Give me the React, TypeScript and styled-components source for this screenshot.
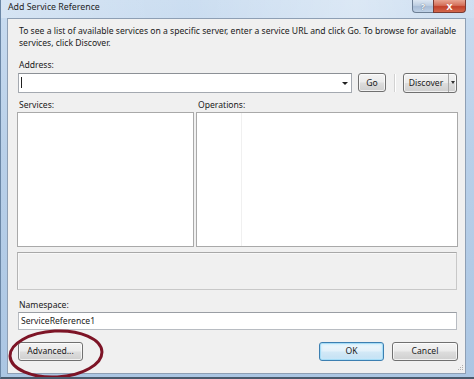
import styled, { createGlobalStyle, css } from 'styled-components';

const GlobalStyle = createGlobalStyle`
    html, body {
        margin: 0;
        padding: 0;
        background: #ffffff;
    }
    * {
        box-sizing: border-box;
    }
`;

const Window = styled.div`
    position: relative;
    width: 474px;
    height: 379px;
    display: flex;
    flex-direction: column;
    overflow: hidden;
    background: linear-gradient(180deg, #c9dcf0 0%, #b9d0e9 40%, #abc6e3 100%);
    border-left: 1px solid #6b87a6;
    border-bottom: 2px solid #4a5a6c;
    font-family: "Noto Sans", "Open Sans", sans-serif;
    color: #1a1a1a;
`;

const TitleBar = styled.div`
    height: 18px;
    display: flex;
    align-items: flex-start;
    justify-content: space-between;
    padding-left: 7px;
    background: linear-gradient(90deg, rgba(255,255,255,0.25) 0%, rgba(255,255,255,0.05) 40%, rgba(255,255,255,0.35) 75%, rgba(255,255,255,0.1) 100%);
`;

const Title = styled.span`
    font-size: 8.8px;
    line-height: 14px;
    color: #1e1e1e;
`;

const Captions = styled.div`
    display: flex;
    margin-right: 8px;
`;

const CaptionButton = styled.div<{ $close?: boolean }>`
    height: 13px;
    width: ${p => (p.$close ? '33px' : '21px')};
    display: flex;
    align-items: center;
    justify-content: center;
    font-size: 9px;
    font-weight: bold;
    color: #ffffff;
    border: 1px solid #6d7f95;
    border-top: none;
    ${p => p.$close
        ? css`
            border-radius: 0 0 4px 0;
            background: linear-gradient(180deg, #e8a593 0%, #d4705a 45%, #c2402a 55%, #d3684c 100%);
            border-color: #7a3b33;
        `
        : css`
            border-right: none;
            border-radius: 0 0 0 4px;
            background: linear-gradient(180deg, #dde7f2 0%, #bfcfe2 45%, #a9bdd6 55%, #bfd1e6 100%);
            color: #f4f8fc;
            text-shadow: 0 0 1px #3c4c60;
        `}
`;

const Client = styled.div`
    flex: 1;
    margin: 0 8px 3px 6px;
    border: 1px solid #8e9fb4;
    background: #f0f0f0;
    padding: 7px 7px 0 9px;
    display: flex;
    flex-direction: column;
`;

const Description = styled.p`
    margin: 0 0 0 2px;
    font-size: 8.6px;
    line-height: 11.8px;
`;

const Label = styled.div<{ $indent?: number }>`
    font-size: 8.6px;
    line-height: 10px;
    padding-left: ${p => p.$indent ?? 2}px;
`;

const AddressBlock = styled.div`
    margin-top: 10px;
    display: flex;
    flex-direction: column;
    gap: 3px;
`;

const AddressRow = styled.div`
    display: flex;
    align-items: center;
    height: 20px;
`;

const Combo = styled.div`
    position: relative;
    width: 334px;
    height: 20px;
    margin-left: 1px;
    margin-right: 6px;
    background: #ffffff;
    border: 1px solid #a4a9b0;
    border-top-color: #8c9096;
    display: flex;
    align-items: center;
    padding-left: 2px;
`;

const Caret = styled.span`
    width: 1px;
    height: 11px;
    background: #202020;
`;

const DropArrow = styled.span`
    position: absolute;
    right: 3px;
    top: 8px;
    width: 0;
    height: 0;
    border-left: 3px solid transparent;
    border-right: 3px solid transparent;
    border-top: 3px solid #202020;
`;

const buttonFace = css`
    border: 1px solid #707070;
    border-radius: 3px;
    background: linear-gradient(180deg, #f3f3f3 0%, #ebebeb 48%, #dddddd 52%, #cfcfcf 100%);
    box-shadow: inset 0 0 0 1px rgba(255,255,255,0.7);
`;

const Button = styled.div<{ $width: number; $default?: boolean }>`
    ${buttonFace}
    width: ${p => p.$width}px;
    height: 19px;
    display: flex;
    align-items: center;
    justify-content: center;
    font-size: 8.6px;
    ${p => p.$default && css`
        border-color: #3c7fb1;
        box-shadow: inset 0 0 0 1px #a6dcf6, inset 0 0 2px 2px rgba(200,235,252,0.7);
        background: linear-gradient(180deg, #eef7fc 0%, #e3f1fa 48%, #d3e9f7 52%, #c4e0f3 100%);
    `}
`;

const Separator = styled.div`
    width: 1px;
    height: 18px;
    margin: 0 8px;
    background: #d2d2d2;
    box-shadow: 1px 0 0 #ffffff;
`;

const SplitButton = styled.div`
    ${buttonFace}
    width: 54px;
    height: 20px;
    display: flex;
    font-size: 8.6px;
`;

const SplitMain = styled.div`
    flex: 1;
    display: flex;
    align-items: center;
    justify-content: center;
    border-right: 1px solid #a8a8a8;
`;

const SplitArrow = styled.div`
    width: 7px;
    display: flex;
    align-items: center;
    justify-content: center;
    &::after {
        content: '';
        border-left: 2.5px solid transparent;
        border-right: 2.5px solid transparent;
        border-top: 3px solid #303030;
    }
`;

const ListsHeader = styled.div`
    margin-top: 7px;
    display: flex;
`;

const ServicesLabel = styled(Label)`
    width: 178px;
`;

const Lists = styled.div`
    margin-top: 2px;
    display: flex;
    gap: 2px;
    height: 135px;
`;

const ListBox = styled.div<{ $width: number }>`
    width: ${p => p.$width}px;
    height: 100%;
    background: #ffffff;
    border: 1px solid #a9a9a9;
    display: flex;
`;

const TreePane = styled.div`
    width: 45px;
    border-right: 1px solid #f0f0f0;
`;

const StatusBox = styled.div`
    margin-top: 5px;
    height: 38px;
    width: 440px;
    border: 1px solid #c8c8c8;
    border-top-color: #a8a8a8;
    border-left-color: #b4b4b4;
    box-shadow: inset 1px 1px 0 #f8f8f8;
    background: #f0f0f0;
`;

const NamespaceBlock = styled.div`
    margin-top: 10px;
    display: flex;
    flex-direction: column;
    gap: 2px;
`;

const TextBox = styled.div`
    width: 439px;
    height: 18px;
    margin-left: 1px;
    background: #ffffff;
    border: 1px solid #b8bcc2;
    border-top-color: #9a9ea4;
    display: flex;
    align-items: center;
    padding-left: 2px;
    font-size: 8.6px;
`;

const Footer = styled.div`
    margin-top: 12px;
    display: flex;
    align-items: center;
    gap: 8px;
    padding-left: 1px;
`;

const Spacer = styled.div`
    flex: 1;
`;

const Highlight = styled.svg`
    position: absolute;
    left: 0;
    top: 320px;
    pointer-events: none;
`;

const Grip = styled.svg`
    position: absolute;
    right: 10px;
    bottom: 6px;
`;

const App = () => {
    return (
        <>
            <GlobalStyle />
            <Window>
                <TitleBar>
                    <Title>Add Service Reference</Title>
                    <Captions>
                        <CaptionButton>?</CaptionButton>
                        <CaptionButton $close>X</CaptionButton>
                    </Captions>
                </TitleBar>
                <Client>
                    <Description>
                        To see a list of available services on a specific server, enter a service URL and click Go. To browse for available<br />
                        services, click Discover.
                    </Description>

                    <AddressBlock>
                        <Label>Address:</Label>
                        <AddressRow>
                            <Combo>
                                <Caret />
                                <DropArrow />
                            </Combo>
                            <Button $width={28}>Go</Button>
                            <Separator />
                            <SplitButton>
                                <SplitMain>Discover</SplitMain>
                                <SplitArrow />
                            </SplitButton>
                        </AddressRow>
                    </AddressBlock>

                    <ListsHeader>
                        <ServicesLabel>Services:</ServicesLabel>
                        <Label $indent={3}>Operations:</Label>
                    </ListsHeader>
                    <Lists>
                        <ListBox $width={177} />
                        <ListBox $width={262}>
                            <TreePane />
                        </ListBox>
                    </Lists>

                    <StatusBox />

                    <NamespaceBlock>
                        <Label>Namespace:</Label>
                        <TextBox>ServiceReference1</TextBox>
                    </NamespaceBlock>

                    <Footer>
                        <Button $width={65}>Advanced...</Button>
                        <Spacer />
                        <Button $width={65} $default>OK</Button>
                        <Button $width={66}>Cancel</Button>
                    </Footer>
                </Client>

                <Highlight width="120" height="60" viewBox="0 0 120 60">
                    <ellipse cx="55" cy="34" rx="46" ry="23" fill="none" stroke="#7d1426" strokeWidth="3" transform="rotate(-3 55 34)" />
                </Highlight>
                <Grip width="8" height="8" viewBox="0 0 8 8">
                    <rect x="6" y="2" width="1" height="1" fill="#b0b0b0" />
                    <rect x="4" y="4" width="1" height="1" fill="#b0b0b0" />
                    <rect x="6" y="4" width="1" height="1" fill="#b0b0b0" />
                    <rect x="2" y="6" width="1" height="1" fill="#b0b0b0" />
                    <rect x="4" y="6" width="1" height="1" fill="#b0b0b0" />
                    <rect x="6" y="6" width="1" height="1" fill="#b0b0b0" />
                </Grip>
            </Window>
        </>
    );
};

export default App;
